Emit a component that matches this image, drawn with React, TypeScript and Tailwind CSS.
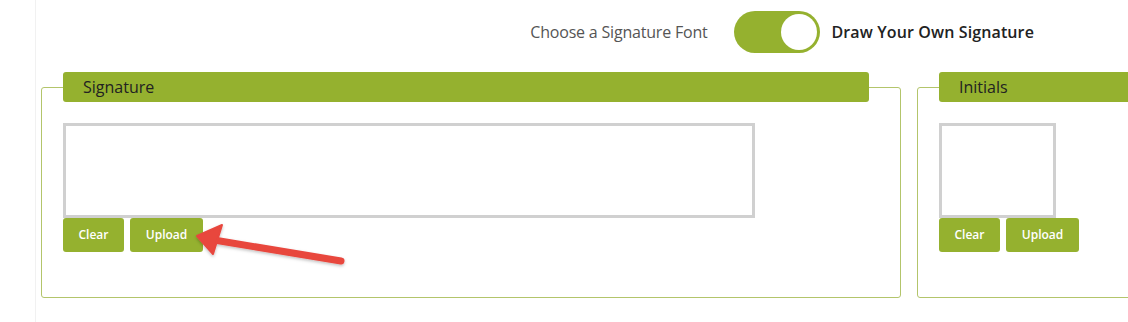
const green = "bg-[#95b12f]";

function ActionButton({ label, width }: { label: string; width: string }) {
  return (
    <button
      type="button"
      className={`${green} ${width} h-[34px] rounded-[3px] text-[12px] font-semibold text-white`}
    >
      {label}
    </button>
  );
}

function SignaturePanel({
  title,
  panelWidth,
  legendWidth,
  canvasWidth,
}: {
  title: string;
  panelWidth: string;
  legendWidth: string;
  canvasWidth: string;
}) {
  return (
    <fieldset className={`${panelWidth} shrink-0 rounded-[3px] border border-[#b3c56b] px-[21px] pb-[45px]`}>
      <legend
        className={`${legendWidth} ${green} h-[30px] rounded-[3px] pl-[20px] text-[16px] leading-[30px] text-[#222]`}
      >
        {title}
      </legend>
      <div className={`${canvasWidth} mt-[21px] h-[95px] border-[3px] border-[#d0d0d0] bg-white`} />
      <div className="flex gap-[6px]">
        <ActionButton label="Clear" width="w-[61px]" />
        <ActionButton label="Upload" width="w-[73px]" />
      </div>
    </fieldset>
  );
}

export default function App() {
  return (
    <div
      className="relative h-[322px] w-[1128px] overflow-hidden bg-white"
      style={{ fontFamily: '"Open Sans", "Noto Sans", sans-serif' }}
    >
      <div className="ml-[35px] h-full border-l border-[#f1f1f1]">
        <div className="flex items-center justify-end pr-[94px] pt-[11px]">
          <span className="text-[16px] tracking-[-0.2px] text-[#555]">Choose a Signature Font</span>
          <div className={`${green} ml-[26px] flex h-[42px] w-[86px] items-center justify-end rounded-full pr-[3px]`}>
            <div className="h-[36px] w-[36px] rounded-full bg-white" />
          </div>
          <span className="ml-[12px] text-[16px] font-semibold tracking-[0.12px] text-[#222]">
            Draw Your Own Signature
          </span>
        </div>

        <div className="mt-[19px] flex gap-[16px] pl-[5px]">
          <SignaturePanel title="Signature" panelWidth="w-[860px]" legendWidth="w-[806px]" canvasWidth="w-[692px]" />
          <SignaturePanel title="Initials" panelWidth="w-[240px]" legendWidth="w-[200px]" canvasWidth="w-[117px]" />
        </div>
      </div>

      <svg className="pointer-events-none absolute inset-0" width="1128" height="322" viewBox="0 0 1128 322">
        <defs>
          <filter id="arrow-shadow" x="-10%" y="-30%" width="120%" height="160%">
            <feDropShadow dx="0" dy="1.5" stdDeviation="1.5" floodColor="#000" floodOpacity="0.25" />
          </filter>
        </defs>
        <g filter="url(#arrow-shadow)" fill="#e8463e" stroke="#e8463e">
          <line x1="341" y1="261" x2="214" y2="240" strokeWidth="7" strokeLinecap="round" />
          <polygon points="197,236 222,225 213,254" strokeWidth="2" strokeLinejoin="round" />
        </g>
      </svg>
    </div>
  );
}
